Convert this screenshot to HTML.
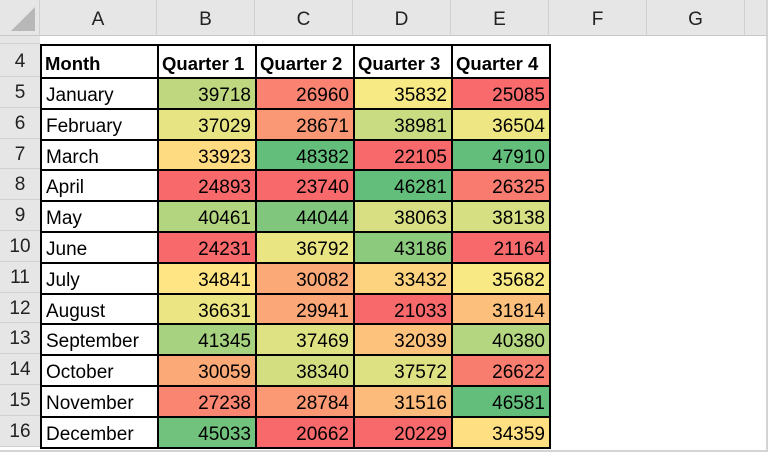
<!DOCTYPE html><html><head><style>
body{margin:0;width:768px;height:452px;overflow:hidden;background:#fff;font-family:"Liberation Sans",sans-serif;position:relative}
.hdr{position:absolute;top:0;height:36px;background:#e6e6e6;border-right:1px solid #d0d0d0;border-bottom:1px solid #c8c8c8;box-sizing:border-box;text-align:center;line-height:40px;font-size:19px;color:#222}
.rh{position:absolute;left:0;width:40px;background:#e6e6e6;border-bottom:1px solid #d0d0d0;box-sizing:border-box;text-align:center;font-size:19px;color:#222}
.c{position:absolute;box-sizing:border-box;font-size:19px;color:#000;padding:0 4px;white-space:nowrap}
</style></head><body>
<div id="g"></div>
<div style="position:absolute;right:0;top:0;width:2px;height:452px;background:#d4d4d4"></div>
<div style="position:absolute;left:0;bottom:0;width:768px;height:2px;background:#d4d4d4"></div>
<script>
var cols=[[40,157,'A'],[157,255,'B'],[255,353,'C'],[353,451,'D'],[451,549,'E'],[549,647,'F'],[647,745,'G'],[745,768,'']];
var h='<div class="hdr" style="left:0;width:40px"><div style="position:absolute;right:4px;bottom:4px;width:0;height:0;border-left:24px solid transparent;border-bottom:24px solid #b8b8b8"></div></div>';
cols.forEach(function(c){h+='<div class="hdr" style="left:'+c[0]+'px;width:'+(c[1]-c[0])+'px">'+c[2]+'</div>';});
var d=[["January",39718,26960,35832,25085],["February",37029,28671,38981,36504],["March",33923,48382,22105,47910],["April",24893,23740,46281,26325],["May",40461,44044,38063,38138],["June",24231,36792,43186,21164],["July",34841,30082,33432,35682],["August",36631,29941,21033,31814],["September",41345,37469,32039,40380],["October",30059,38340,37572,26622],["November",27238,28784,31516,46581],["December",45033,20662,20229,34359]];
function mix(a,b,t){t=Math.max(0,Math.min(1,t));return a.map(function(v,i){return Math.round(v+(b[i]-v)*t)})}
var R=[248,105,107],Y=[255,235,132],G=[99,190,123];
var mn=25000,md=35300,mx=46000;
function col(v){var k=v<md?mix(R,Y,(v-mn)/(md-mn)):mix(Y,G,(v-md)/(mx-md));return 'rgb('+k.join(',')+')'}
var tops=[44];for(var i=0;i<13;i++)tops.push(77+i*30.8);
h+='<div class="rh" style="top:36px;height:8px"></div>';
for(var i=0;i<13;i++){var t=tops[i],ht=tops[i+1]-t;h+='<div class="rh" style="top:'+t+'px;height:'+ht+'px;line-height:'+(ht+2)+'px">'+(i+4)+'</div>';}
var hd=["Month","Quarter 1","Quarter 2","Quarter 3","Quarter 4"];
for(var r=0;r<13;r++){var t=tops[r],ht=tops[r+1]-t;
 for(var c=0;c<5;c++){var x0=cols[c][0],w=cols[c][1]-x0;var txt,bg='#fff',st='';
  if(r==0){txt=hd[c];st='font-weight:bold;font-size:18.5px;padding:0 3px;';}
  else{var v=d[r-1][c];txt=v;if(c>0){bg=col(v);st='text-align:right;';}}
  h+='<div class="c" style="left:'+x0+'px;top:'+t+'px;width:'+(w+2)+'px;height:'+(ht+2)+'px;line-height:'+(ht+3)+'px;background:'+bg+';border:2px solid #000;'+st+'">'+txt+'</div>';}}
document.getElementById('g').innerHTML=h;
</script>
</body></html>
